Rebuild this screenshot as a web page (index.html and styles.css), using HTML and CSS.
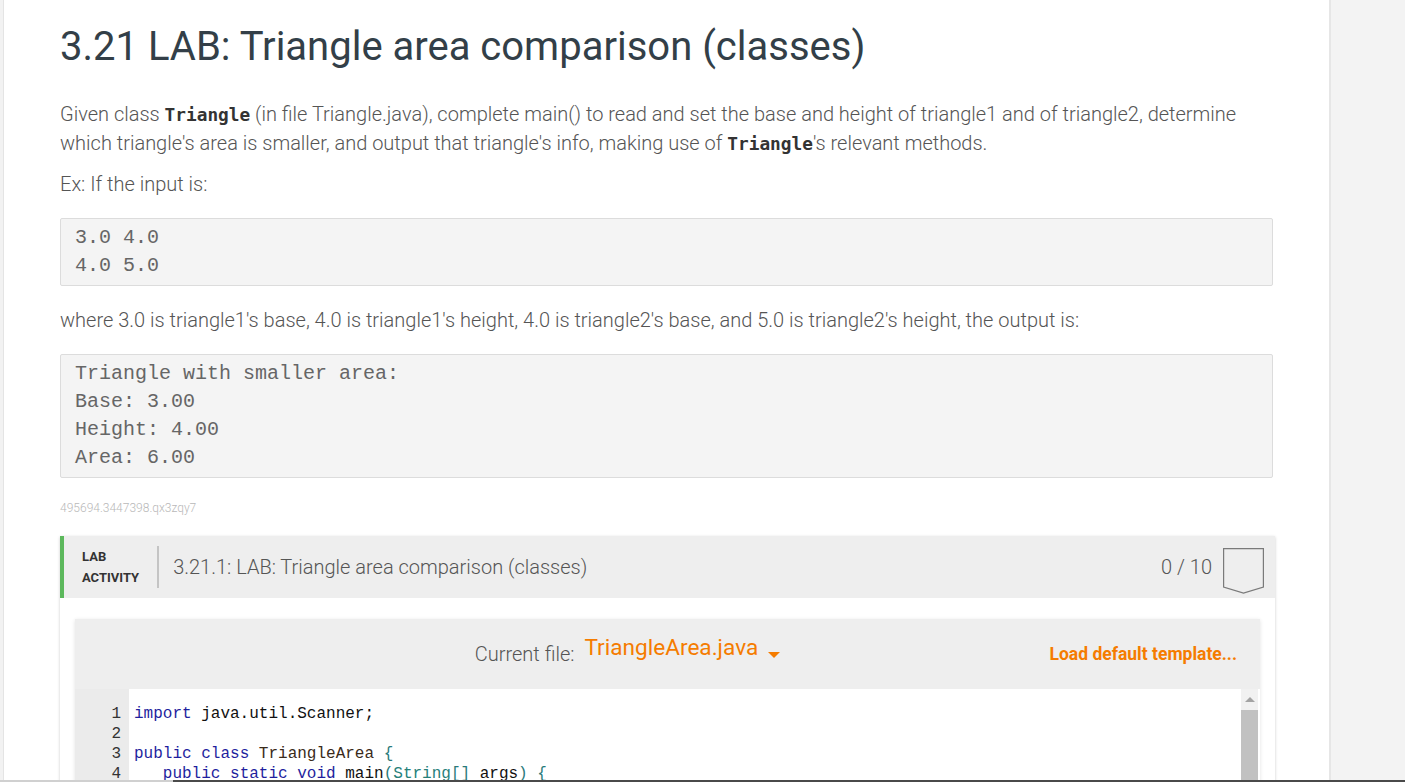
FILE: index.html
```html
<!DOCTYPE html>
<html lang="en">
<head>
<meta charset="utf-8">
<title>3.21 LAB: Triangle area comparison (classes)</title>
<link rel="stylesheet" href="styles.css">
</head>
<body>
<div class="page">
  <div class="left-rail"></div>
  <main class="content">
    <h1 class="title">3.21 LAB: Triangle area comparison (classes)</h1>
    <p class="text">Given class <code class="inline">Triangle</code> (in file Triangle.java), complete main() to read and set the base and height of triangle1 and of triangle2, determine which triangle's area is smaller, and output that triangle's info, making use of <code class="inline">Triangle</code>'s relevant methods.</p>
    <p class="text ex">Ex: If the input is:</p>
    <pre class="sample">3.0 4.0
4.0 5.0</pre>
    <p class="text where">where 3.0 is triangle1's base, 4.0 is triangle1's height, 4.0 is triangle2's base, and 5.0 is triangle2's height, the output is:</p>
    <pre class="sample">Triangle with smaller area:
Base: 3.00
Height: 4.00
Area: 6.00</pre>
    <div class="hash">495694.3447398.qx3zqy7</div>

    <section class="lab">
      <header class="lab-head">
        <div class="lab-label">LAB<br>ACTIVITY</div>
        <div class="lab-title">3.21.1: LAB: Triangle area comparison (classes)</div>
        <div class="lab-score">0 / 10</div>
        <svg class="badge" width="41" height="47" viewBox="0 0 41 47" aria-hidden="true">
          <path d="M0.6 0.6 H40.4 V39 L20.5 45 L0.6 39 Z" fill="none" stroke="#7a7a7a" stroke-width="1.2"/>
        </svg>
      </header>
      <div class="lab-body">
        <div class="editor">
          <div class="editor-head">
            <div></div>
            <div class="file">
              <span class="file-label">Current file:</span>
              <span class="file-name">TriangleArea.java</span>
              <svg class="caret" width="12" height="7" viewBox="0 0 12 7" aria-hidden="true"><path d="M0 0 H12 L6 6 Z" fill="#f57c00"/></svg>
            </div>
            <div class="load">Load default template...</div>
          </div>
          <div class="code">
            <div class="gutter">1
2
3
4
5
6</div>
            <div class="lines"><span class="kw">import</span> java.util.Scanner;

<span class="kw">public</span> <span class="kw">class</span> <span class="cls">TriangleArea</span> <span class="br">{</span>
   <span class="kw">public</span> <span class="kw">static</span> <span class="kw">void</span> main<span class="br">(</span><span class="ty">String</span><span class="br">[]</span> args<span class="br">)</span> <span class="br">{</span>
      <span class="ty">Scanner</span> scnr = <span class="kw">new</span> <span class="ty">Scanner</span><span class="br">(</span>System.in<span class="br">)</span>;
</div>
            <div class="scrollbar">
              <div class="sb-arrow"></div>
              <div class="sb-thumb"></div>
            </div>
          </div>
        </div>
      </div>
    </section>
  </main>
  <aside class="side"></aside>
</div>
<div class="bottom-line"></div>
</body>
</html>
```

FILE: styles.css
```css
html, body {
  margin: 0;
  padding: 0;
  height: 100%;
  overflow: hidden;
  background: #f3f3f3;
}

.page {
  display: flex;
  min-height: 100vh;
  font-family: Roboto, "Liberation Sans", sans-serif;
}

.left-rail {
  width: 3px;
  background: #f2f2f2;
  border-right: 1px solid #e4e4e4;
  flex: none;
}

.content {
  width: 1215px;
  padding: 0 54px 0 56px;
  background: #fff;
  flex: none;
}

.side {
  flex: 1;
  background: #f3f3f3;
  border-left: 2px solid #e6e6e6;
}

.title {
  margin: 23px 0 29px;
  font-size: 40px;
  line-height: 48px;
  font-weight: 400;
  color: #333f48;
}

.text {
  margin: 0;
  font-size: 20px;
  line-height: 29px;
  font-weight: 300;
  color: #555;
}

.text.ex {
  margin: 12px 0 19px;
}

.text.where {
  margin: 20px 0 19px;
}

.inline {
  font-family: "DejaVu Sans Mono", "Liberation Mono", monospace;
  font-weight: 700;
  font-size: 17.8px;
  color: #333;
}

.sample {
  margin: 0 2px 0 0;
  padding: 5px 14px;
  background: #f4f4f4;
  border: 1px solid #dcdcdc;
  border-radius: 2px;
  font-family: "Liberation Mono", monospace;
  font-size: 20px;
  line-height: 28px;
  color: #666;
}

.hash {
  margin: 22px 0 20px;
  font-size: 12px;
  line-height: 16px;
  font-weight: 300;
  color: #b8b8b8;
}

.lab {
  background: #fff;
  box-shadow: 0 1px 3px rgba(0, 0, 0, 0.2);
}

.lab-head {
  display: flex;
  align-items: center;
  height: 62px;
  background: #eeeeee;
  border-left: 4px solid #5cb85c;
  padding: 0 11px 0 18px;
}

.lab-label {
  font-size: 13px;
  line-height: 21px;
  font-weight: 700;
  color: #333;
  padding-right: 18px;
  border-right: 2px solid #c4c4c4;
}

.lab-title {
  flex: 1;
  padding-left: 14px;
  font-size: 20px;
  font-weight: 300;
  color: #555;
}

.lab-score {
  font-size: 20px;
  font-weight: 300;
  color: #555;
  margin-right: 11px;
}

.badge {
  display: block;
  margin-top: 8px;
}

.lab-body {
  padding: 21px 15px 0;
}

.editor {
  background: #fff;
  box-shadow: 0 1px 4px rgba(0, 0, 0, 0.12);
}

.editor-head {
  display: grid;
  grid-template-columns: 1fr auto 1fr;
  align-items: center;
  height: 70px;
  background: #eeeeee;
}

.file {
  display: flex;
  align-items: center;
  padding-right: 80px;
}

.file-label {
  font-size: 20px;
  font-weight: 300;
  color: #555;
}

.file-name {
  margin-left: 10px;
  margin-bottom: 13px;
  font-size: 22.6px;
  font-weight: 400;
  color: #f57c00;
}

.caret {
  margin-left: 10px;
  margin-top: 2px;
}

.load {
  justify-self: end;
  padding-right: 23px;
  font-size: 17.5px;
  font-weight: 700;
  color: #f57c00;
}

.code {
  display: flex;
  height: 200px;
  font-family: "Liberation Mono", monospace;
  font-size: 16px;
  line-height: 20px;
}

.gutter {
  width: 46px;
  padding: 15px 8px 0 0;
  background: #ebebeb;
  color: #333;
  text-align: right;
  white-space: pre;
}

.lines {
  flex: 1;
  padding: 15px 0 0 5px;
  white-space: pre;
  color: #111;
}

.kw { color: #1f1f9e; }
.cls { color: #3a2a1a; }
.br { color: #2a7a7a; }
.ty { color: #26807a; }

.scrollbar {
  width: 17px;
  margin-right: 2px;
  background: #f1f1f1;
  display: flex;
  flex-direction: column;
  align-items: center;
}

.sb-arrow {
  margin-top: 8px;
  width: 0;
  height: 0;
  border-left: 5px solid transparent;
  border-right: 5px solid transparent;
  border-bottom: 5px solid #a3a3a3;
}

.sb-thumb {
  margin-top: 8px;
  width: 17px;
  flex: 1;
  background: #c1c1c1;
}

.bottom-line {
  position: fixed;
  left: 0;
  right: 0;
  bottom: 0;
  height: 2px;
  background: linear-gradient(to right, #d0d0d0 0, #d0d0d0 173px, #4a4a4a 173px);
}
```
